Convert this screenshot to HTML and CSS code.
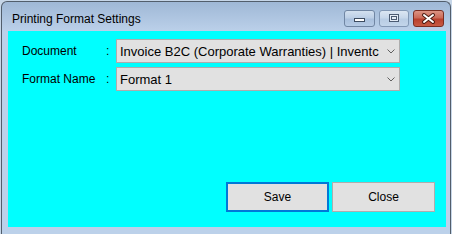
FILE: index.html
```html
<!DOCTYPE html>
<html lang="en">
<head>
    <meta charset="UTF-8">
    <title>Printing Format Settings</title>
    <link rel="stylesheet" href="styles.css">
</head>
<body>
    <div class="window">
        <div class="titlebar">
            <span class="title">Printing Format Settings</span>
            <div class="caption-buttons">
                <span class="cap-btn cap-min">
                    <svg width="29" height="15" viewBox="0 0 29 15"><rect x="9.5" y="7.5" width="10" height="3" fill="#fff" stroke="#3d4c60"/></svg>
                </span>
                <span class="cap-btn cap-max">
                    <svg width="28" height="15" viewBox="0 0 28 15"><rect x="9.5" y="3.5" width="9" height="7" fill="#e4ecf6" stroke="#4b5b72"/><rect x="11.5" y="5.5" width="5" height="3" fill="none" stroke="#4b5b72"/></svg>
                </span>
                <span class="cap-btn cap-close">
                    <svg width="29" height="15" viewBox="0 0 29 15"><path d="M10 4 L19 11 M19 4 L10 11" stroke="#4a1a12" stroke-width="4" stroke-linecap="round"/><path d="M10 4 L19 11 M19 4 L10 11" stroke="#fff" stroke-width="2" stroke-linecap="round"/></svg>
                </span>
            </div>
        </div>

        <div class="client">
            <div class="form-rows">
                <div class="form-row">
                    <label class="field-label">Document</label>
                    <span class="colon">:</span>
                    <div class="combo">
                        <span class="combo-text">Invoice B2C (Corporate Warranties) | Inventc</span>
                        <svg class="chevron" width="8" height="5" viewBox="0 0 8 5"><path d="M0.5 0.5 L4 4 L7.5 0.5" fill="none" stroke="#606060"/></svg>
                    </div>
                </div>
                <div class="form-row">
                    <label class="field-label">Format Name</label>
                    <span class="colon">:</span>
                    <div class="combo">
                        <span class="combo-text">Format 1</span>
                        <svg class="chevron" width="8" height="5" viewBox="0 0 8 5"><path d="M0.5 0.5 L4 4 L7.5 0.5" fill="none" stroke="#606060"/></svg>
                    </div>
                </div>
            </div>

            <div class="actions">
                <button class="btn btn-default">Save</button>
                <button class="btn">Close</button>
            </div>
        </div>
    </div>
</body>
</html>
```

FILE: styles.css
```css
body {
    margin: 0;
    padding: 1px 0 0 1px;
    background-color: #c6d6e8;
    font-family: "Liberation Sans", Arial, sans-serif;
    font-size: 12px;
    color: #000;
}
.window {
    width: 450px;
    height: 233px;
    box-sizing: border-box;
    border: 1px solid #525e6c;
    border-bottom: none;
    border-radius: 6px 6px 0 0;
    background: linear-gradient(to bottom, #9fb8d6 0, #bcd1ea 30px);
    padding: 0 4px 7px 6px;
    display: flex;
    flex-direction: column;
}
.titlebar {
    height: 29px;
    margin: 0 -4px 0 -6px;
    padding: 0 6px 0 10px;
    display: flex;
    align-items: flex-start;
}
.title {
    margin-top: 10px;
    line-height: 15px;
}
.caption-buttons {
    margin-left: auto;
    margin-top: 8px;
    display: flex;
    gap: 4px;
}
.cap-btn {
    width: 31px;
    height: 17px;
    box-sizing: border-box;
    border: 1px solid #7086a3;
    border-radius: 3px;
    background: linear-gradient(to bottom, #d3e0ef 0, #bccfe6 45%, #a9c0dd 55%, #b6cbe5 100%);
    display: flex;
}
.cap-max {
    width: 30px;
    background: linear-gradient(to bottom, #dbe6f2 0, #c7d7ea 45%, #b9cde4 55%, #c3d5ea 100%);
    border-color: #8298b5;
}
.cap-close {
    border-color: #7a2d22;
    background: linear-gradient(to bottom, #dc9484 0, #cc6a58 45%, #b9402d 55%, #c85a44 100%);
}
.client {
    flex: 1;
    background-color: #00ffff;
    padding: 8px 11px 15px 14px;
    display: flex;
    flex-direction: column;
}
.form-rows {
    display: flex;
    flex-direction: column;
    gap: 4px;
}
.form-row {
    display: flex;
    align-items: center;
    height: 24px;
}
.field-label {
    width: 84px;
}
.colon {
    width: 10px;
}
.combo {
    width: 284px;
    height: 24px;
    box-sizing: border-box;
    border: 1px solid #adadad;
    background-color: #e1e1e1;
    padding: 0 4px 0 3px;
    display: flex;
    align-items: center;
}
.combo-text {
    flex: 1;
    overflow: hidden;
    white-space: nowrap;
    font-size: 13px;
}
.chevron {
    margin-left: 6px;
    flex-shrink: 0;
}
.actions {
    margin-top: auto;
    display: flex;
    justify-content: flex-end;
    gap: 3px;
}
.btn {
    width: 103px;
    height: 30px;
    border: 1px solid #adadad;
    background-color: #e1e1e1;
    font-family: "Liberation Sans", Arial, sans-serif;
    font-size: 12px;
    color: #000;
    padding: 0;
}
.btn-default {
    border: 2px solid #0078d7;
}
```
